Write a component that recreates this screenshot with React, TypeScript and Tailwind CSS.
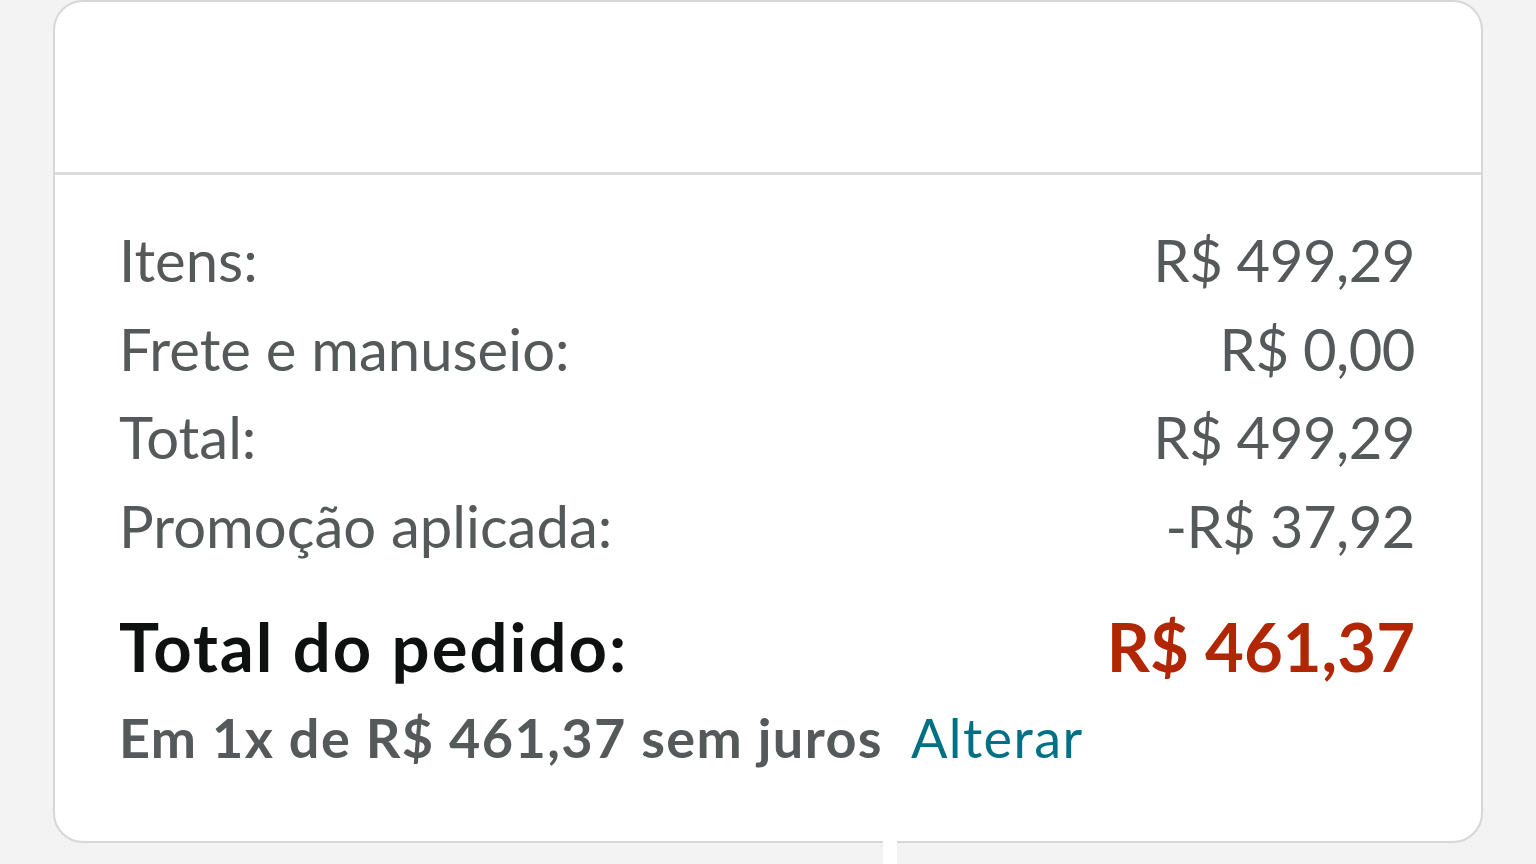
import React from "react";

const rows: [string, string][] = [
  ["Itens:", "R$ 499,29"],
  ["Frete e manuseio:", "R$ 0,00"],
  ["Total:", "R$ 499,29"],
  ["Promoção aplicada:", "-R$ 37,92"],
];

export default function App() {
  return (
    <div
      className="w-[1536px] h-[864px] overflow-hidden bg-[#f3f3f3] flex flex-col"
      style={{ fontFamily: "Lato, 'Open Sans', sans-serif" }}
    >
      <div className="ml-[53px] w-[1430px] h-[843px] shrink-0 bg-white border-[2.5px] border-[#d7d7d7] rounded-[30px] flex flex-col overflow-hidden">
        <div className="h-[173px] shrink-0 border-b-[3px] border-[#dcdcdc]" />
        <div className="pt-[41px] pl-[64px] pr-[66px] flex flex-col">
          {rows.map(([l, r]) => (
            <div
              key={l}
              className="flex justify-between items-baseline h-[88.7px] leading-[88.7px] text-[58px] text-[#565959]"
            >
              <span>{l}</span>
              <span className="tracking-[-0.5px]">{r}</span>
            </div>
          ))}
          <div className="mt-[30px] flex justify-between items-baseline h-[90px] leading-[90px] text-[67px] font-bold">
            <span className="text-[#0f1111] tracking-[2px]">Total do pedido:</span>
            <span className="text-[#b12704]">R$ 461,37</span>
          </div>
          <div className="mt-[7px] flex items-baseline h-[80px] leading-[80px] text-[54px]">
            <span className="inline-block w-[763px] shrink-0 whitespace-nowrap font-bold text-[#565959] tracking-[1.4px]">
              Em 1x de R$ 461,37 sem juros
            </span>
            <span className="ml-[29px] text-[#007185] tracking-[1.4px]">Alterar</span>
          </div>
        </div>
      </div>
      <div className="ml-[883px] -mt-[3px] w-[14px] h-[30px] bg-white shrink-0" />
    </div>
  );
}
